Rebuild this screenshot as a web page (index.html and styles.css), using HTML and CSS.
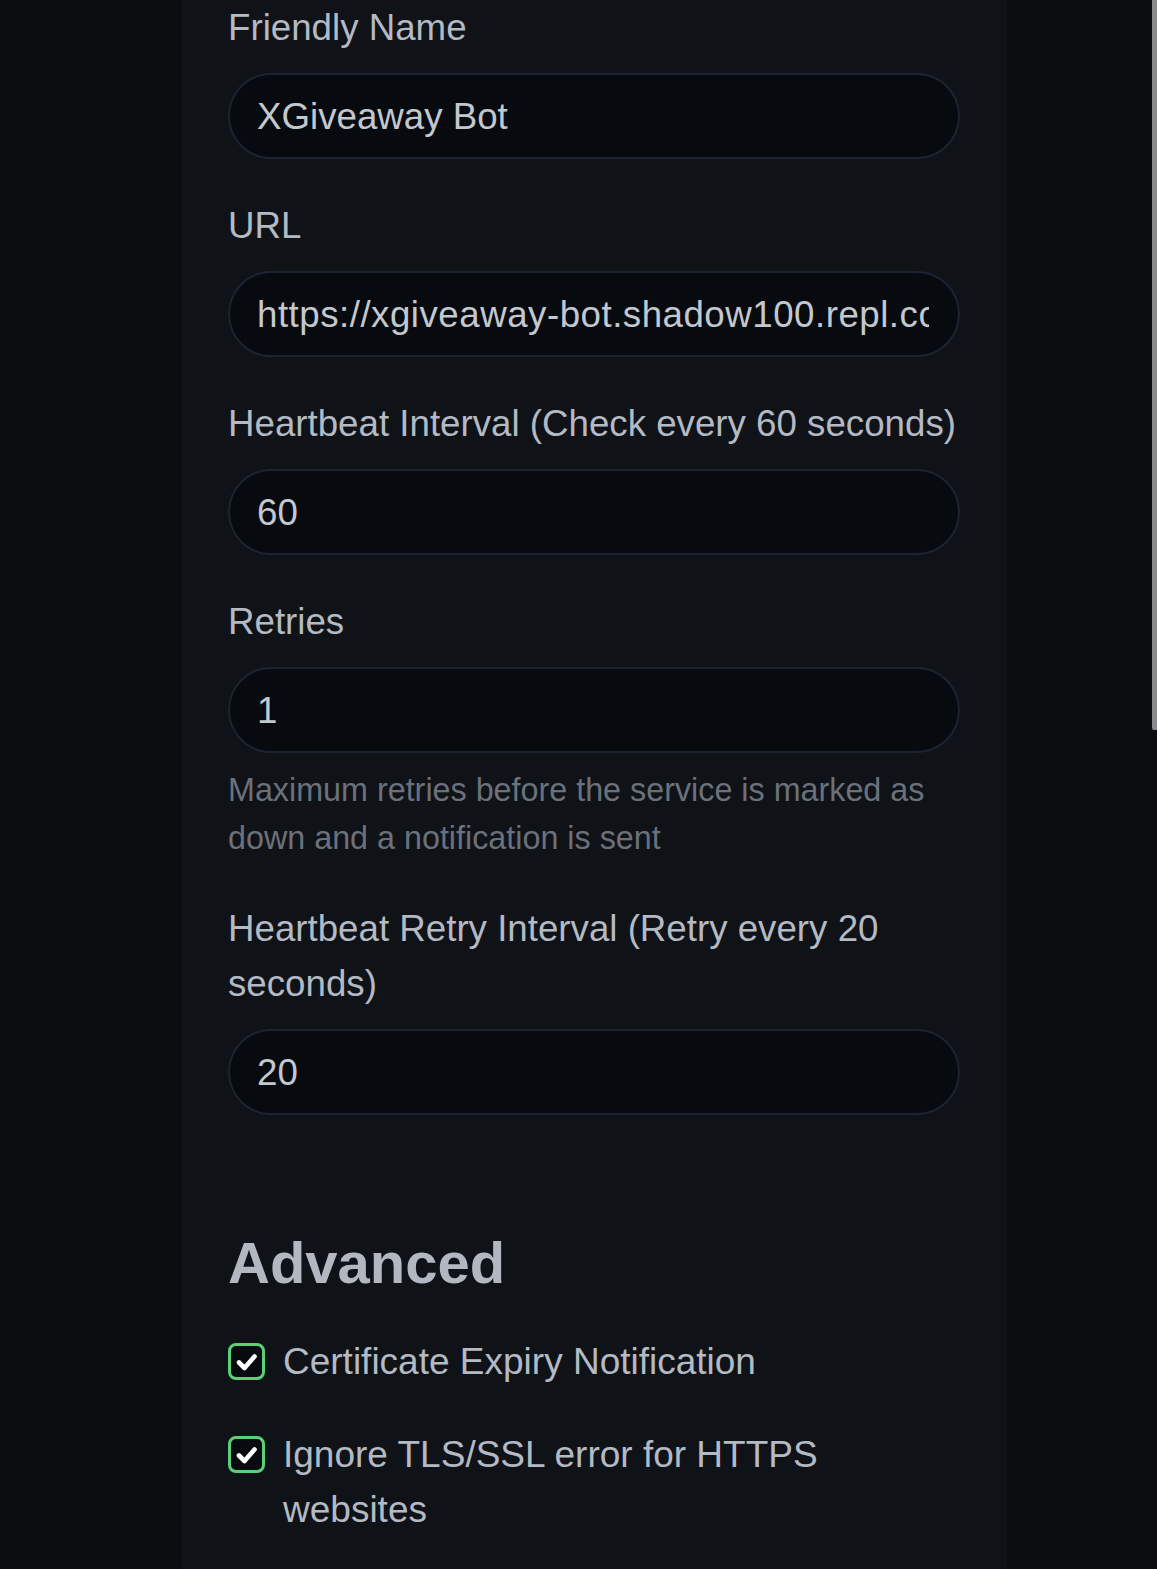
FILE: index.html
```html
<!DOCTYPE html>
<html lang="en">
<head>
<meta charset="utf-8">
<title>Edit Monitor</title>
<link rel="stylesheet" href="styles.css">
</head>
<body>
<div class="page">
  <div class="card">
    <div class="field">
      <label class="label">Friendly Name</label>
      <input class="input" type="text" value="XGiveaway Bot" readonly>
    </div>
    <div class="field">
      <label class="label">URL</label>
      <input class="input input-url" type="text" value="https://xgiveaway-bot.shadow100.repl.co" readonly>
    </div>
    <div class="field">
      <label class="label">Heartbeat Interval (Check every 60 seconds)</label>
      <input class="input" type="text" value="60" readonly>
    </div>
    <div class="field">
      <label class="label">Retries</label>
      <input class="input" type="text" value="1" readonly>
      <div class="hint">Maximum retries before the service is marked as down and a notification is sent</div>
    </div>
    <div class="field">
      <label class="label">Heartbeat Retry Interval (Retry every 20 seconds)</label>
      <input class="input" type="text" value="20" readonly>
    </div>

    <h2 class="heading">Advanced</h2>

    <div class="check-row">
      <span class="checkbox"><svg viewBox="0 0 37 37" width="37" height="37"><path d="M11 19.5 L16.5 25 L26.5 13.5" fill="none" stroke="#fff" stroke-width="4.6" stroke-linecap="round" stroke-linejoin="round"/></svg></span>
      <span class="check-text">Certificate Expiry Notification</span>
    </div>
    <div class="check-row">
      <span class="checkbox"><svg viewBox="0 0 37 37" width="37" height="37"><path d="M11 19.5 L16.5 25 L26.5 13.5" fill="none" stroke="#fff" stroke-width="4.6" stroke-linecap="round" stroke-linejoin="round"/></svg></span>
      <span class="check-text">Ignore TLS/SSL error for HTTPS websites</span>
    </div>
  </div>
</div>
<div class="scrollbar"></div>
</body>
</html>
```

FILE: styles.css
```css
html, body {
  margin: 0;
  padding: 0;
  background: #0a0c10;
  height: 100%;
  overflow: hidden;
}

body {
  font-family: "Liberation Sans", Arial, Helvetica, sans-serif;
}

.page {
  padding-left: 182px;
  min-height: 100%;
  display: flex;
}

.card {
  width: 733px;
  padding: 0 46px 0 46px;
  background: #0f1217;
  min-height: 1569px;
  box-sizing: content-box;
}

.field {
  display: flex;
  flex-direction: column;
  margin-bottom: 39px;
}

.label {
  font-size: 36.7px;
  line-height: 55px;
  color: #b4bac3;
  margin-bottom: 18px;
}

.input {
  box-sizing: border-box;
  width: 732px;
  height: 86px;
  border: 2px solid #1c2331;
  border-radius: 43px;
  background: #070a0e;
  color: #c3c8cf;
  font-family: "Liberation Sans", Arial, Helvetica, sans-serif;
  font-size: 36.7px;
  padding: 2px 29px 0 27px;
  outline: none;
  margin: 0;
}

.input-url {
  letter-spacing: 0.5px;
}

.hint {
  margin-top: 13px;
  font-size: 32.3px;
  line-height: 48px;
  color: #6b717b;
  width: 732px;
}

.heading {
  margin: 114px 0 38px 0;
  font-size: 58px;
  line-height: 67px;
  font-weight: bold;
  color: #b2b7c0;
}

.check-row {
  display: flex;
  align-items: flex-start;
  gap: 18px;
  margin-bottom: 38px;
  width: 732px;
}

.checkbox {
  flex: none;
  box-sizing: border-box;
  width: 37px;
  height: 37px;
  margin-top: 9px;
  border: 3px solid #5ccf7a;
  border-radius: 8px;
  background: #070a0e;
  display: flex;
  align-items: center;
  justify-content: center;
  overflow: hidden;
}

.checkbox svg {
  flex: none;
  display: block;
}

.check-text {
  font-size: 37px;
  line-height: 55px;
  color: #b4bac3;
}

.scrollbar {
  position: fixed;
  top: 0;
  right: 0;
  width: 5px;
  height: 730px;
  background: #8b8b8b;
  border-bottom-left-radius: 2px;
}
```
